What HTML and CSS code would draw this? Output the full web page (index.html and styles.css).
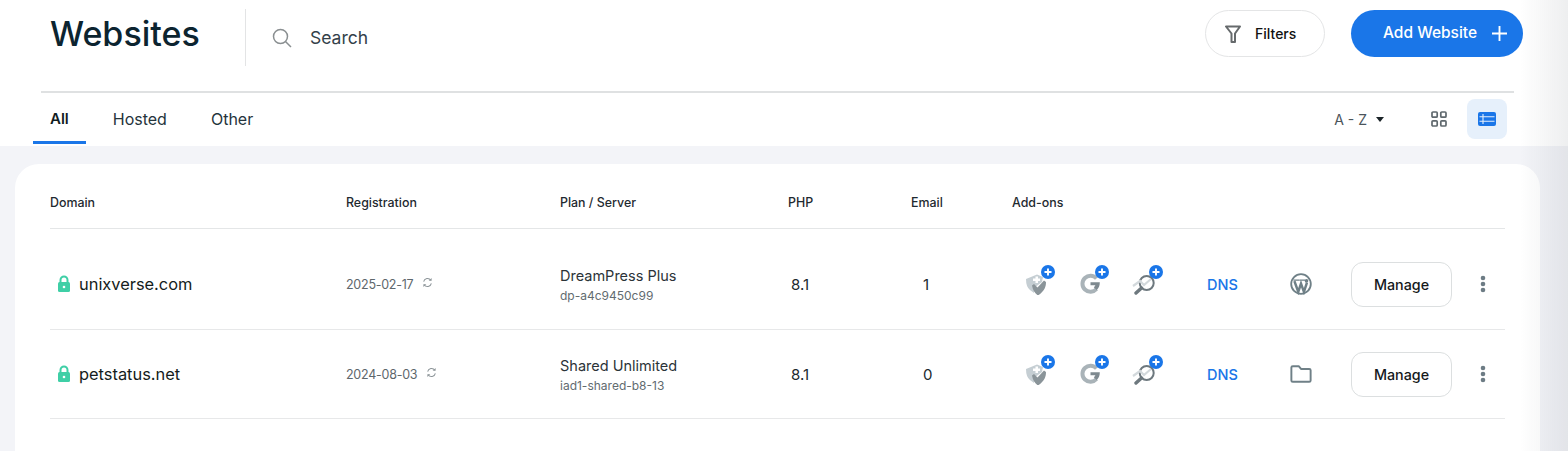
FILE: index.html
```html
<!DOCTYPE html>
<html lang="en">
<head>
<meta charset="utf-8">
<title>Websites</title>
<link rel="stylesheet" href="styles.css">
</head>
<body>
<svg class="defs" width="0" height="0" aria-hidden="true">
  <defs>
    <g id="badge"><circle cx="24" cy="7" r="7" fill="#1a76e8"/><path d="M24 3.500v7M20.500 7h7" stroke="#fff" stroke-width="1.900"/></g>
    <symbol id="shield" viewBox="0 0 32 30">
      <path d="M2 14 13 9.500l6 2.500-1 5-8 6v5l-4-3Q2 22 2 14Z" fill="#c5ced3"/>
      <path d="M9 13.500h2.500v-2H14v2h2V16h-2v2h-2.500v-2H9Z" fill="#fff"/>
      <path d="M8 20.500l2-1.500 3.500 3.500 6.500-7 2 1.500c0 5-1.500 9-8 13.500-3-2-5-5-6-10Z" fill="#8a9499"/>
      <use href="#badge"/>
    </symbol>
    <symbol id="google" viewBox="0 0 32 30">
      <path d="M18.500 13.500A8 8 0 1 0 18.500 24" fill="none" stroke="#a9b3b8" stroke-width="4"/>
      <path d="M12.500 17.200h9.300c0 3.800-1 5.800-3.200 7.800l-2.800-2.700c.8-.6 1.400-1.400 1.600-2h-4.900Z" fill="#7f8a90"/>
      <use href="#badge"/>
    </symbol>
    <symbol id="seo" viewBox="0 0 32 30">
      <circle cx="14.700" cy="18" r="7" fill="none" stroke="#6d787e" stroke-width="2"/>
      <path d="M1 21 8 16l4 4 7-6" fill="none" stroke="#d3d9dc" stroke-width="2.200"/>
      <path d="M9.500 23 4 28" stroke="#6d787e" stroke-width="3.400" stroke-linecap="round"/>
      <use href="#badge"/>
    </symbol>
    <symbol id="lock" viewBox="0 0 14 18">
      <path d="M3.500 8V5a3.500 3.500 0 0 1 7 0v3" fill="none" stroke="#3fcfa6" stroke-width="2"/>
      <rect x="1" y="7" width="12" height="10" rx="1.500" fill="#3fcfa6"/>
      <circle cx="7" cy="12" r="1.300" fill="#fff"/>
    </symbol>
    <symbol id="renew" viewBox="0 0 12 12">
      <path d="M1.800 5A4.300 4.300 0 0 1 9.600 3.500M10.200 7A4.300 4.300 0 0 1 2.400 8.500" fill="none" stroke="#8d9599" stroke-width="1.100"/>
      <path d="M10.500 1v3.200H7.300ZM1.500 11V7.800h3.200Z" fill="#8d9599"/>
    </symbol>
    <symbol id="dots" viewBox="0 0 8 20">
      <circle cx="4" cy="4" r="2.300" fill="#6d7c85"/><circle cx="4" cy="10" r="2.300" fill="#6d7c85"/><circle cx="4" cy="16" r="2.300" fill="#6d7c85"/>
    </symbol>
  </defs>
</svg>

<header class="top">
  <div class="titlebar">
    <h1 class="title">Websites</h1>
    <div class="search">
      <svg class="search-icon" viewBox="0 0 20 20"><circle cx="8.500" cy="8.500" r="7" fill="none" stroke="#8a8f91" stroke-width="1.500"/><path d="m13.500 13.500 5.500 5.500" stroke="#8a8f91" stroke-width="1.500"/></svg>
      <span class="search-text">Search</span>
    </div>
    <button class="filters">
      <svg class="filter-icon" viewBox="0 0 16 18"><path d="M1 1.500h14L10 8.500V17H6.500V8.500Z" fill="none" stroke="#666a6c" stroke-width="2" stroke-linejoin="round"/></svg>
      Filters
    </button>
    <button class="add"><span class="add-label">Add Website</span>
      <svg class="add-icon" viewBox="0 0 16 16"><path d="M8 0v16M0 8h16" stroke="#fff" stroke-width="2"/></svg>
    </button>
  </div>
  <nav class="tabs">
    <a class="tab active">All</a>
    <a class="tab">Hosted</a>
    <a class="tab">Other</a>
    <div class="tools">
      <span class="sort">A - Z</span><span class="caret"></span>
      <button class="view">
        <svg class="view-icon" viewBox="0 0 16 16"><g fill="none" stroke="#5f686d" stroke-width="1.700"><rect x="1" y="1" width="5.200" height="5.200" rx="1"/><rect x="9.800" y="1" width="5.200" height="5.200" rx="1"/><rect x="1" y="9.800" width="5.200" height="5.200" rx="1"/><rect x="9.800" y="9.800" width="5.200" height="5.200" rx="1"/></g></svg>
      </button>
      <button class="view on">
        <svg class="list-icon" viewBox="0 0 18 14"><rect width="18" height="14" rx="2" fill="#1a76e8"/><path d="M1.500 4.700h15M1.500 9.300h15M5 2v10" stroke="#e6f0fb" stroke-width="1.100"/></svg>
      </button>
    </div>
  </nav>
</header>

<main class="card">
  <div class="row head">
    <div>Domain</div><div>Registration</div><div>Plan / Server</div><div>PHP</div><div>Email</div><div>Add-ons</div>
  </div>
  <div class="rows">
    <div class="row item">
      <div class="domain"><svg class="lock"><use href="#lock"/></svg>unixverse.com</div>
      <div class="reg">2025-02-17<svg class="renew"><use href="#renew"/></svg></div>
      <div class="plan"><div class="plan-name">DreamPress Plus</div><div class="server">dp-a4c9450c99</div></div>
      <div class="php">8.1</div>
      <div class="email">1</div>
      <div class="addons">
        <svg class="addon"><use href="#shield"/></svg>
        <svg class="addon"><use href="#google"/></svg>
        <svg class="addon"><use href="#seo"/></svg>
        <a class="dns">DNS</a>
        <svg class="cms" viewBox="0 0 24 24"><circle cx="12" cy="12" r="10.700" fill="none" stroke="#6f8087" stroke-width="2"/><path d="M4.800 8.800 9 20.500l3-9 3.200 9 3.300-10" fill="none" stroke="#6f8087" stroke-width="2.700"/><path d="M3.800 7.800h6.500M10.500 7.800h6" stroke="#6f8087" stroke-width="1.400"/><circle cx="18" cy="8.500" r="2" fill="#6f8087"/></svg>
        <button class="manage">Manage</button>
        <svg class="dots"><use href="#dots"/></svg>
      </div>
    </div>
    <div class="row item">
      <div class="domain"><svg class="lock"><use href="#lock"/></svg>petstatus.net</div>
      <div class="reg">2024-08-03<svg class="renew"><use href="#renew"/></svg></div>
      <div class="plan"><div class="plan-name">Shared Unlimited</div><div class="server">iad1-shared-b8-13</div></div>
      <div class="php">8.1</div>
      <div class="email">0</div>
      <div class="addons">
        <svg class="addon"><use href="#shield"/></svg>
        <svg class="addon"><use href="#google"/></svg>
        <svg class="addon"><use href="#seo"/></svg>
        <a class="dns">DNS</a>
        <svg class="cms" viewBox="0 0 24 24"><path d="M1.500 5a1.500 1.500 0 0 1 1.500-1.500h6.500l2.500 3h9A1.500 1.500 0 0 1 22.500 8v11a1.500 1.500 0 0 1-1.500 1.500H3A1.500 1.500 0 0 1 1.500 19Z" fill="none" stroke="#6f8087" stroke-width="2.100" stroke-linejoin="round"/></svg>
        <button class="manage">Manage</button>
        <svg class="dots"><use href="#dots"/></svg>
      </div>
    </div>
  </div>
</main>
<div class="edge"></div>
</body>
</html>
```
FILE: styles.css
```css
* { box-sizing: border-box; }
html, body { height: 100%; }
body {
  display: flex;
  flex-direction: column;
  margin: 0;
  background: #f3f4f8;
  font-family: Inter, "Liberation Sans", sans-serif;
  color: #1b2428;
  overflow: hidden;
}
button { font-family: inherit; cursor: pointer; }
.defs { position: absolute; }

.top { flex: none; background: #fff; height: 146px; padding-left: 41px; padding-right: 54px; }
.titlebar {
  display: flex;
  align-items: flex-start;
  height: 93px;
  border-bottom: 2px solid #dfe1e2;
  padding-left: 9px;
}
.title {
  margin: 9px 0 0;
  font-size: 34px;
  line-height: 50px;
  font-weight: 500;
  color: #0c2430;
  width: 195px;
}
.search {
  display: flex;
  align-items: center;
  flex: 1;
  height: 57px;
  margin-top: 9px;
  border-left: 1px solid #e3e4e5;
  padding-left: 26px;
}
.search-icon { width: 20px; height: 20px; margin-right: 18px; }
.search-text { font-size: 17.500px; color: #33414a; }
.filters {
  display: flex;
  align-items: center;
  width: 120px;
  height: 47px;
  margin-top: 10px;
  padding: 0 0 0 19px;
  background: #fff;
  border: 1px solid #e4e5e6;
  border-radius: 24px;
  font-size: 14px;
  font-weight: 500;
  color: #111;
}
.filter-icon { width: 16px; height: 18px; margin-right: 14px; }
.add {
  display: flex;
  align-items: center;
  width: 172px;
  height: 47px;
  margin: 10px -9px 0 26px;
  padding: 0 0 0 32px;
  background: #1a76e8;
  border: 0;
  border-radius: 24px;
  color: #fff;
  font-size: 15.500px;
  font-weight: 500;
}
.add-label { margin-bottom: 2px; }
.add-icon { width: 15px; height: 15px; margin-left: 15px; }

.tabs { display: flex; align-items: flex-start; height: 51px; margin-left: -8px; }
.tab {
  display: block;
  height: 51px;
  padding: 16px 17px 0;
  font-size: 16px;
  line-height: 20px;
  color: #25343c;
  margin-right: 10px;
}
.tab.active { font-size: 15px; font-weight: 600; color: #111c22; border-bottom: 3px solid #1a76e8; }
.tools { display: flex; align-items: center; margin-left: auto; margin-top: 6px; margin-right: 7px; }
.sort { font-size: 14px; color: #4b555b; }
.caret {
  width: 0; height: 0;
  margin: 0 35px 0 9px;
  border: 4.500px solid transparent;
  border-top: 5px solid #1b2428;
  border-bottom: 0;
}
.view {
  display: flex; align-items: center; justify-content: center;
  width: 40px; height: 40px;
  padding: 0; border: 0; background: none; border-radius: 8px;
}
.view.on { background: #e6f0fb; margin-left: 8px; }
.view-icon { width: 16px; height: 16px; }
.list-icon { width: 18px; height: 14px; }

.card {
  flex: 1;
  min-height: 0;
  margin: 18px 28px 0 15px;
  padding: 0 35px;
  background: #fff;
  border-radius: 24px 24px 0 0;
}
.row { display: grid; grid-template-columns: 296px 214px 228px 123px 101px 1fr; align-items: center; }
.head {
  height: 65px;
  padding-top: 13px;
  border-bottom: 1px solid #e4e6e7;
  font-size: 12.400px;
  font-weight: 500;
  color: #1f2a30;
}
.rows { padding-top: 10px; }
.item { height: 89px; border-bottom: 1px solid #e7e8e9; }
.item:first-child { height: 91px; }
.domain { display: flex; align-items: center; font-size: 16.400px; color: #141c20; }
.lock { width: 14px; height: 18px; margin: 0 8px 0 7px; }
.reg { display: flex; align-items: center; font-size: 12.500px; letter-spacing: -.25px; color: #5e676c; }
.renew { width: 11px; height: 11px; margin: -3px 0 0 9px; }
.plan { padding-top: 3px; }
.plan-name { font-size: 14.500px; line-height: 20px; color: #2b3338; }
.server { font-size: 12px; line-height: 20px; color: #626b70; }
.php, .email { font-size: 15px; color: #20292e; }
.php { padding-left: 3px; }
.email { padding-left: 12px; }
.addons { display: flex; align-items: center; padding-left: 12px; }
.addon { width: 32px; height: 30px; margin: -8px 22px 0 0; flex: none; }
.dns { font-size: 14.500px; font-weight: 500; color: #1a76e8; margin-left: 21px; width: 83px; flex: none; }
.cms { width: 22px; height: 22px; flex: none; }
.manage {
  width: 101px;
  height: 45px;
  flex: none;
  margin-left: 39px;
  padding: 0;
  background: #fff;
  border: 1px solid #dcdfe0;
  border-radius: 12px;
  font-size: 14.300px;
  font-weight: 500;
  color: #15191c;
}
.dots { width: 8px; height: 20px; flex: none; margin-left: 27px; }
.edge {
  position: fixed;
  top: 0; right: 0; bottom: 0;
  width: 48px;
  background: linear-gradient(to right, rgba(60,70,80,0), rgba(60,70,80,.09));
  pointer-events: none;
}
```
